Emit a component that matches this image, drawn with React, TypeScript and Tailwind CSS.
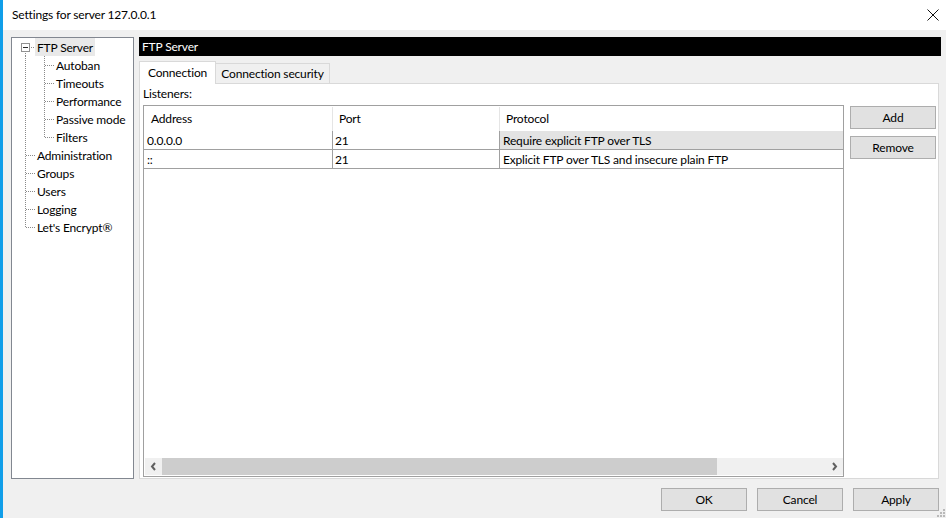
import React from "react";

type Node = {
  label: string;
  level: 0 | 1;
  last?: boolean;
  expander?: boolean;
  selected?: boolean;
};

const tree: Node[] = [
  { label: "FTP Server", level: 0, expander: true, selected: true },
  { label: "Autoban", level: 1 },
  { label: "Timeouts", level: 1 },
  { label: "Performance", level: 1 },
  { label: "Passive mode", level: 1 },
  { label: "Filters", level: 1, last: true },
  { label: "Administration", level: 0 },
  { label: "Groups", level: 0 },
  { label: "Users", level: 0 },
  { label: "Logging", level: 0 },
  { label: "Let's Encrypt®", level: 0, last: true },
];

const listeners = [
  { address: "0.0.0.0", port: "21", protocol: "Require explicit FTP over TLS", active: true },
  { address: "::", port: "21", protocol: "Explicit FTP over TLS and insecure plain FTP" },
];

const dot = {
  stroke: "#8a8a8a",
  strokeWidth: 1,
  strokeDasharray: "1 1",
  shapeRendering: "crispEdges" as const,
};

function Connector({ node }: { node: Node }) {
  if (node.level === 1) {
    return (
      <svg width="42" height="18" className="shrink-0">
        <line x1="13.5" y1="0" x2="13.5" y2="18" {...dot} />
        <line x1="32.5" y1="0" x2="32.5" y2={node.last ? 10 : 18} {...dot} />
        <line x1="33" y1="9.5" x2="42" y2="9.5" {...dot} />
      </svg>
    );
  }
  if (node.expander) {
    return (
      <svg width="23" height="18" className="shrink-0">
        <rect x="9.5" y="5.5" width="8" height="8" fill="#fff" stroke="#919191" shapeRendering="crispEdges" />
        <line x1="11" y1="9.5" x2="16" y2="9.5" stroke="#2b2b2b" shapeRendering="crispEdges" />
        <line x1="13.5" y1="15" x2="13.5" y2="18" {...dot} />
        <line x1="19" y1="9.5" x2="23" y2="9.5" {...dot} />
      </svg>
    );
  }
  return (
    <svg width="23" height="18" className="shrink-0">
      <line x1="13.5" y1="0" x2="13.5" y2={node.last ? 10 : 18} {...dot} />
      <line x1="14" y1="9.5" x2="23" y2="9.5" {...dot} />
    </svg>
  );
}

function Button({ children }: { children: React.ReactNode }) {
  return (
    <div className="flex h-[23px] w-[86px] items-center justify-center border border-[#adadad] bg-[#e1e1e1] pt-px">
      {children}
    </div>
  );
}

function Chevron({ dir }: { dir: "left" | "right" }) {
  return (
    <svg width="17" height="17" className="shrink-0">
      {dir === "left" ? (
        <polyline points="10,5 7,8.5 10,12" fill="none" stroke="#606060" strokeWidth="2" />
      ) : (
        <polyline points="7,5 10,8.5 7,12" fill="none" stroke="#606060" strokeWidth="2" />
      )}
    </svg>
  );
}

export default function App() {
  return (
    <div className="flex h-[518px] w-[946px] overflow-hidden bg-[#f0f0f0] font-['Lato',sans-serif] text-[12px] leading-[16px] tracking-[-0.17px] text-black">
      <div className="w-[3px] shrink-0 bg-[#109ee9]" />
      <div className="relative flex flex-1 flex-col">
        {/* title bar */}
        <div className="flex h-[30px] items-center justify-between bg-white pl-[9px] pr-[7px]">
          <span>Settings for server 127.0.0.1</span>
          <svg width="12" height="12" viewBox="0 0 12 12">
            <path d="M0.5 0.5 L11.5 11.5 M11.5 0.5 L0.5 11.5" stroke="#111" strokeWidth="1" fill="none" />
          </svg>
        </div>

        <div className="flex gap-[5px] pl-[8px] pt-[7px]">
          {/* page tree */}
          <div className="h-[442px] w-[123px] border border-[#828790] bg-white">
            {tree.map((node) => (
              <div key={node.label} className="flex h-[18px] items-center">
                <Connector node={node} />
                <span
                  className={
                    "flex h-[18px] items-center whitespace-nowrap px-[2px] pt-px " +
                    (node.selected ? "bg-[#e9e9e9]" : "")
                  }
                >
                  {node.label}
                </span>
              </div>
            ))}
          </div>

          {/* settings page */}
          <div className="flex w-[802px] flex-col">
            <div className="flex h-[19px] items-center bg-black pl-[3px] text-white">FTP Server</div>
            <div className="mt-[5px] flex h-[22px] items-end">
              <div className="relative z-10 -mb-px flex h-[23px] w-[77px] items-center justify-center border border-b-0 border-[#d9d9d9] bg-white">
                Connection
              </div>
              <div className="flex h-[20px] w-[114px] items-center justify-center border border-b-0 border-l-0 border-[#d9d9d9] bg-[#f0f0f0] pt-px">
                Connection security
              </div>
            </div>
            <div className="flex h-[396px] w-[800px] flex-col border border-[#d9d9d9] bg-white pl-[3px] pt-[2px]">
              <div className="h-[16px]">Listeners:</div>
              <div className="mt-[3px] flex">
                {/* listener grid */}
                <div className="flex h-[372px] w-[701px] flex-col border border-[#a0a0a0] bg-white">
                  <div className="flex h-[25px] pt-px">
                    <div className="flex w-[189px] items-center border-r border-[#e5e5e5] pl-[7px]">Address</div>
                    <div className="flex w-[167px] items-center border-r border-[#e5e5e5] pl-[6px]">Port</div>
                    <div className="flex flex-1 items-center pl-[6px]">Protocol</div>
                  </div>
                  {listeners.map((l) => (
                    <div key={l.address} className="flex h-[19px] border-b border-[#a0a0a0]">
                      <div className="flex w-[189px] items-center border-r border-[#a0a0a0] pl-[3px] pt-px">{l.address}</div>
                      <div className="flex w-[167px] items-center border-r border-[#a0a0a0] pl-[2px] pt-px">{l.port}</div>
                      <div
                        className={
                          "flex flex-1 items-center pl-[3px] pt-px " + (l.active ? "bg-[#e3e3e3]" : "")
                        }
                      >
                        {l.protocol}
                      </div>
                    </div>
                  ))}
                  <div className="flex-1" />
                  {/* horizontal scrollbar */}
                  <div className="mb-[1px] ml-[1px] flex h-[17px] bg-[#f0f0f0]">
                    <Chevron dir="left" />
                    <div className="flex flex-1">
                      <div className="w-[555px] bg-[#cdcdcd]" />
                    </div>
                    <Chevron dir="right" />
                  </div>
                </div>
                <div className="ml-[6px] mt-[1px] flex flex-col gap-[7px]">
                  <Button>Add</Button>
                  <Button>Remove</Button>
                </div>
              </div>
            </div>
          </div>
        </div>

        {/* dialog buttons */}
        <div className="flex justify-end gap-[10px] pr-[7px] pt-[9px]">
          <Button>OK</Button>
          <Button>Cancel</Button>
          <Button>Apply</Button>
        </div>

        {/* size grip */}
        <svg width="9" height="9" className="absolute bottom-0 right-0">
          <rect x="6" y="0" width="2" height="2" fill="#b9b9b9" />
          <rect x="3" y="3" width="2" height="2" fill="#b9b9b9" />
          <rect x="6" y="3" width="2" height="2" fill="#b9b9b9" />
          <rect x="0" y="6" width="2" height="2" fill="#b9b9b9" />
          <rect x="3" y="6" width="2" height="2" fill="#b9b9b9" />
          <rect x="6" y="6" width="2" height="2" fill="#b9b9b9" />
        </svg>
      </div>
    </div>
  );
}
